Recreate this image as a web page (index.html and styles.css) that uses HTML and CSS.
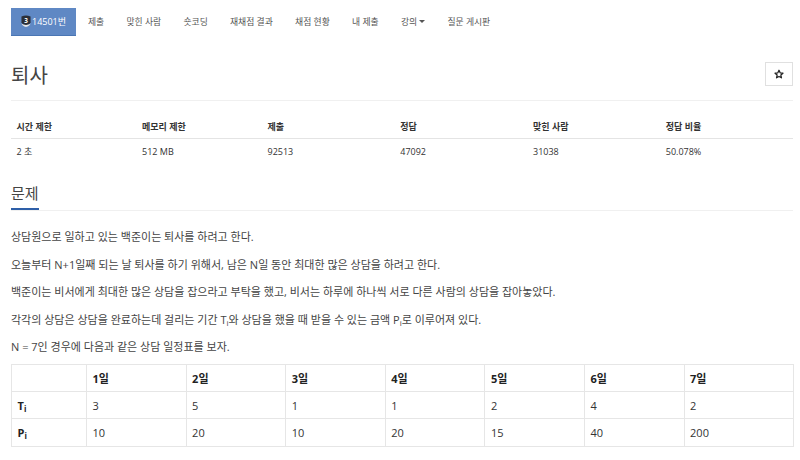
FILE: index.html
```html
<!DOCTYPE html>
<html lang="ko">
<head>
  <meta charset="UTF-8">
  <title>14501번: 퇴사</title>
  <link rel="stylesheet" href="styles.css">
</head>
<body>

  <!-- PROBLEM MENU -->
  <ul class="menu">
    <li class="active">
      <a>
        <svg class="tier" width="10" height="13" viewBox="0 0 11 14">
          <path d="M0.5 1.5 Q5.5 -0.5 10.5 1.5 V8 Q8.5 11.5 5.5 12.5 Q2.5 11.5 0.5 8 Z" fill="#2b2f38"/>
          <path d="M0.5 9.5 Q5.5 12 10.5 9.5 L9 11.5 Q5.5 14.5 2 11.5 Z" fill="#e3e6ea"/>
          <text x="5.5" y="8.5" class="tier-num">3</text>
        </svg>
        14501번
      </a>
    </li>
    <li><a>제출</a></li>
    <li><a>맞힌 사람</a></li>
    <li><a>숏코딩</a></li>
    <li><a>재채점 결과</a></li>
    <li><a>채점 현황</a></li>
    <li><a>내 제출</a></li>
    <li><a>강의<span class="caret"></span></a></li>
    <li><a>질문 게시판</a></li>
  </ul>

  <!-- TITLE -->
  <div class="page-header">
    <h1>퇴사</h1>
    <button class="star-btn">
      <svg width="10" height="10" viewBox="0 0 24 24">
        <path d="M12 3 L14.8 9.2 L21.5 10 L16.5 14.6 L17.9 21.2 L12 17.8 L6.1 21.2 L7.5 14.6 L2.5 10 L9.2 9.2 Z" fill="none" stroke="#222" stroke-width="3" stroke-linejoin="round"/>
      </svg>
    </button>
  </div>

  <!-- LIMITS -->
  <table class="info">
    <thead>
      <tr>
        <th class="c16">시간 제한</th>
        <th class="c16">메모리 제한</th>
        <th class="c17">제출</th>
        <th class="c17">정답</th>
        <th class="c17">맞힌 사람</th>
        <th class="c17">정답 비율</th>
      </tr>
    </thead>
    <tbody>
      <tr>
        <td>2 초</td>
        <td>512 MB</td>
        <td>92513</td>
        <td>47092</td>
        <td>31038</td>
        <td>50.078%</td>
      </tr>
    </tbody>
  </table>

  <!-- DESCRIPTION -->
  <div class="headline"><h2>문제</h2></div>
  <div class="description">
    <p>상담원으로 일하고 있는 백준이는 퇴사를 하려고 한다.</p>
    <p>오늘부터 N+1일째 되는 날 퇴사를 하기 위해서, 남은 N일 동안 최대한 많은 상담을 하려고 한다.</p>
    <p>백준이는 비서에게 최대한 많은 상담을 잡으라고 부탁을 했고, 비서는 하루에 하나씩 서로 다른 사람의 상담을 잡아놓았다.</p>
    <p>각각의 상담은 상담을 완료하는데 걸리는 기간 T<sub>i</sub>와 상담을 했을 때 받을 수 있는 금액 P<sub>i</sub>로 이루어져 있다.</p>
    <p>N = 7인 경우에 다음과 같은 상담 일정표를 보자.</p>
  </div>

  <table class="schedule">
    <thead>
      <tr>
        <th class="first"></th>
        <th>1일</th><th>2일</th><th>3일</th><th>4일</th><th>5일</th><th>6일</th><th class="last">7일</th>
      </tr>
    </thead>
    <tbody>
      <tr>
        <th>T<sub>i</sub></th>
        <td>3</td><td>5</td><td>1</td><td>1</td><td>2</td><td>4</td><td>2</td>
      </tr>
      <tr>
        <th>P<sub>i</sub></th>
        <td>10</td><td>20</td><td>10</td><td>20</td><td>15</td><td>40</td><td>200</td>
      </tr>
    </tbody>
  </table>

</body>
</html>
```

FILE: styles.css
```css
body {
  font-family: "Open Sans", "Noto Sans CJK KR", sans-serif;
  font-size: 10px;
  margin: 0;
  padding: 8px 7px 0 11px;
  background: #fff;
  color: #333;
}
.menu {
  display: flex;
  list-style: none;
  margin: 0;
  padding: 0;
  height: 28px;
}
.menu li { margin-right: 0.3px; }
.menu a {
  display: flex;
  align-items: center;
  height: 28px;
  padding: 0 11px 1px;
  box-sizing: border-box;
  font-size: 8.8px;
  color: #555;
}
.menu .active { margin-right: 1px; }
.menu .active a {
  width: 65px;
  background: #5f88c4;
  border-bottom: 1px solid #4a76b4;
  color: #fff;
  font-size: 9px;
  padding: 0 0 0 10px;
  gap: 1px;
}
.tier { flex: none; }
.tier-num {
  font-size: 7px;
  font-weight: 700;
  fill: #fff;
  text-anchor: middle;
}
.caret {
  display: inline-block;
  margin-left: 2px;
  border-top: 3px solid #555;
  border-left: 3px solid transparent;
  border-right: 3px solid transparent;
}
.page-header {
  display: flex;
  justify-content: space-between;
  align-items: center;
  box-sizing: border-box;
  margin-top: 19px;
  height: 46px;
  padding-bottom: 7px;
  border-bottom: 1px solid #f0f0f0;
}
h1 {
  font-size: 20px;
  font-weight: 400;
  margin: 0;
  color: #444;
}
.star-btn {
  width: 28px;
  height: 24px;
  margin: 0;
  padding: 0;
  background: #fff;
  border: 1px solid #e0e0e0;
  display: flex;
  align-items: center;
  justify-content: center;
}
.info {
  width: 100%;
  border-collapse: collapse;
  table-layout: fixed;
  margin-top: 14px;
  font-size: 9px;
}
.c16 { width: 16%; }
.c17 { width: 17%; }
.info th, .info td {
  text-align: left;
  padding: 0 5.5px;
  height: 24px;
}
.info th {
  height: 23px;
  font-weight: 700;
  color: #333;
  border-bottom: 1px solid #e4e4e4;
}
.headline {
  margin-top: 14px;
  height: 33px;
  border-bottom: 1px solid #f0f0f0;
}
h2 {
  display: inline-block;
  font-size: 15px;
  font-weight: 400;
  line-height: 33px;
  height: 33px;
  box-sizing: border-box;
  margin: 0;
  border-bottom: 2px solid #2e5fa8;
  color: #444;
}
.description { margin-top: 12px; }
.description p {
  margin: 0;
  font-size: 11px;
  line-height: 27.5px;
  color: #444;
}
sub {
  font-size: 8px;
  line-height: 0;
  vertical-align: -2px;
}
.schedule {
  width: 782px;
  border-collapse: collapse;
  table-layout: fixed;
  margin-top: 3px;
  font-size: 11px;
}
.schedule th, .schedule td {
  box-sizing: border-box;
  text-align: left;
  border: 1px solid #e6e6e6;
  padding: 0 5.5px;
  height: 27.4px;
  width: 99.6px;
  color: #333;
}
.schedule th { font-weight: 700; color: #222; }
.schedule .first { width: 75px; }
.schedule .last { width: 109.4px; }
```
